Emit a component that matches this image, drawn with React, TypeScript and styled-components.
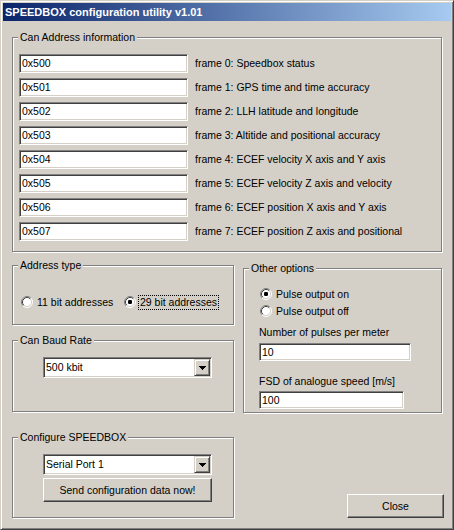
import React from "react";
import styled, { createGlobalStyle } from "styled-components";

const GlobalStyle = createGlobalStyle`
  html, body { margin: 0; padding: 0; background: #d4d0c8; }
  body { font-family: "Liberation Sans", Arial, sans-serif; }
`;

const Window = styled.div`
  box-sizing: border-box;
  width: 454px;
  height: 530px;
  background: #d4d0c8;
  border: 1px solid;
  border-color: #d4d0c8 #404040 #404040 #d4d0c8;
  box-shadow: inset 1px 1px 0 #fff, inset -1px -1px 0 #808080;
  padding: 2px;
  display: flex;
  flex-direction: column;
  font-family: "Liberation Sans", Arial, sans-serif;
  font-size: 10.5px;
  color: #000;
`;

const TitleBar = styled.div`
  height: 18px;
  flex: none;
  display: flex;
  align-items: center;
  padding-left: 2px;
  background: linear-gradient(to right, #0a246a, #a6caf0);
  color: #fff;
  font-weight: bold;
  font-size: 11px;
  white-space: nowrap;
`;

const Body = styled.div`
  padding: 16px 7px 0 9px;
  display: flex;
  flex-direction: column;
`;

const GroupBox = styled.div<{ $w: number; $pad: string; $mt?: number }>`
  position: relative;
  box-sizing: border-box;
  width: ${(p) => p.$w}px;
  margin-top: ${(p) => p.$mt ?? 0}px;
  padding: ${(p) => p.$pad};
  border: 1px solid #808080;
  box-shadow: 1px 1px 0 #fff, inset 1px 1px 0 #fff;
  display: flex;
  flex-direction: column;
`;

const Legend = styled.span`
  position: absolute;
  top: -7px;
  left: 5px;
  padding: 0 2px;
  line-height: 13px;
  background: #d4d0c8;
  white-space: nowrap;
`;

const AddressList = styled.div`
  display: flex;
  flex-direction: column;
  gap: 5px;
`;

const AddressRow = styled.div`
  display: flex;
  align-items: center;
  gap: 7px;
`;

const EditBox = styled.div<{ $w: number; $h: number }>`
  box-sizing: border-box;
  width: ${(p) => p.$w}px;
  height: ${(p) => p.$h}px;
  flex: none;
  background: #fff;
  border: 1px solid;
  border-color: #808080 #fff #fff #808080;
  box-shadow: inset 1px 1px 0 #404040, inset -1px -1px 0 #d4d0c8;
  padding: 0 2px;
  line-height: ${(p) => p.$h - 2}px;
  white-space: nowrap;
  overflow: hidden;
`;

const FrameLabel = styled.span`
  white-space: nowrap;
  line-height: 13px;
  margin-top: -1px;
`;

const Lower = styled.div`
  display: flex;
  gap: 9px;
  margin-top: 13px;
`;

const LeftCol = styled.div`
  width: 222px;
  display: flex;
  flex-direction: column;
`;

const RightCol = styled.div`
  width: 201px;
  margin-top: 3px;
  display: flex;
  flex-direction: column;
  align-items: flex-start;
`;

const RadioRowH = styled.div`
  display: flex;
  align-items: center;
`;

const RadioColumn = styled.div`
  display: flex;
  flex-direction: column;
  gap: 1px;
  margin-left: 1px;
`;

const RadioItem = styled.div<{ $w?: number }>`
  display: flex;
  align-items: center;
  gap: 2px;
  height: 16px;
  width: ${(p) => (p.$w ? `${p.$w}px` : "auto")};
`;

const RadioLabel = styled.span<{ $focus?: boolean }>`
  border: 1px dotted ${(p) => (p.$focus ? "#000" : "transparent")};
  padding: 0 1px;
  line-height: 13px;
  white-space: nowrap;
`;

const FieldLabel = styled.div<{ $mt: number }>`
  margin-top: ${(p) => p.$mt}px;
  line-height: 13px;
  height: 13px;
  white-space: nowrap;
`;

const FieldBox = styled(EditBox)<{ $mt: number }>`
  margin-top: ${(p) => p.$mt}px;
`;

const Combo = styled.div`
  box-sizing: border-box;
  width: 169px;
  height: 21px;
  display: flex;
  background: #fff;
  border: 1px solid;
  border-color: #808080 #fff #fff #808080;
  box-shadow: inset 1px 1px 0 #404040, inset -1px -1px 0 #d4d0c8;
  padding: 1px;
`;

const ComboText = styled.div`
  flex: 1;
  padding-left: 1px;
  line-height: 17px;
  white-space: nowrap;
`;

const DropButton = styled.div`
  box-sizing: border-box;
  width: 16px;
  height: 17px;
  display: flex;
  align-items: center;
  justify-content: center;
  background: #d4d0c8;
  border: 1px solid;
  border-color: #d4d0c8 #404040 #404040 #d4d0c8;
  box-shadow: inset 1px 1px 0 #fff, inset -1px -1px 0 #808080;
`;

const PushButton = styled.div<{ $w: number; $mt: number }>`
  box-sizing: border-box;
  width: ${(p) => p.$w}px;
  height: 24px;
  margin-top: ${(p) => p.$mt}px;
  display: flex;
  align-items: center;
  justify-content: center;
  background: #d4d0c8;
  border: 1px solid;
  border-color: #fff #404040 #404040 #fff;
  box-shadow: inset -1px -1px 0 #808080;
  white-space: nowrap;
`;

const CloseButton = styled(PushButton)`
  align-self: flex-end;
`;

const Radio: React.FC<{ checked?: boolean }> = ({ checked }) => (
  <svg width="12" height="12" viewBox="0 0 12 12" style={{ flex: "none" }}>
    <circle cx="6" cy="6" r="5" fill="#fff" />
    <path d="M2.11 9.89 A5.5 5.5 0 0 1 9.89 2.11" stroke="#808080" fill="none" />
    <path d="M9.89 2.11 A5.5 5.5 0 0 1 2.11 9.89" stroke="#fff" fill="none" />
    <path d="M2.82 9.18 A4.5 4.5 0 0 1 9.18 2.82" stroke="#404040" fill="none" />
    <path d="M9.18 2.82 A4.5 4.5 0 0 1 2.82 9.18" stroke="#d4d0c8" fill="none" />
    {checked && <rect x="4" y="4" width="4" height="4" rx="1.2" fill="#000" />}
  </svg>
);

const DownArrow: React.FC = () => (
  <svg width="7" height="4" viewBox="0 0 7 4" shapeRendering="crispEdges">
    <rect x="0" y="0" width="7" height="1" fill="#000" />
    <rect x="1" y="1" width="5" height="1" fill="#000" />
    <rect x="2" y="2" width="3" height="1" fill="#000" />
    <rect x="3" y="3" width="1" height="1" fill="#000" />
  </svg>
);

const frames = [
  ["0x500", "frame 0: Speedbox status"],
  ["0x501", "frame 1: GPS time and time accuracy"],
  ["0x502", "frame 2: LLH latitude and longitude"],
  ["0x503", "frame 3: Altitide and positional accuracy"],
  ["0x504", "frame 4: ECEF velocity X axis and Y axis"],
  ["0x505", "frame 5: ECEF velocity Z axis and velocity"],
  ["0x506", "frame 6: ECEF position X axis and Y axis"],
  ["0x507", "frame 7: ECEF position Z axis and positional"],
];

export default function App() {
  return (
    <>
      <GlobalStyle />
      <Window>
        <TitleBar>SPEEDBOX configuration utility v1.01</TitleBar>
        <Body>
          <GroupBox $w={430} $pad="16px 6px 10px 6px">
            <Legend>Can Address information</Legend>
            <AddressList>
              {frames.map(([addr, label]) => (
                <AddressRow key={addr}>
                  <EditBox $w={169} $h={19}>{addr}</EditBox>
                  <FrameLabel>{label}</FrameLabel>
                </AddressRow>
              ))}
            </AddressList>
          </GroupBox>
          <Lower>
            <LeftCol>
              <GroupBox $w={222} $pad="28px 8px 14px 8px">
                <Legend>Address type</Legend>
                <RadioRowH>
                  <RadioItem $w={103}>
                    <Radio />
                    <RadioLabel>11 bit addresses</RadioLabel>
                  </RadioItem>
                  <RadioItem>
                    <Radio checked />
                    <RadioLabel $focus>29 bit addresses</RadioLabel>
                  </RadioItem>
                </RadioRowH>
              </GroupBox>
              <GroupBox $w={222} $mt={15} $pad="16px 8px 33px 30px">
                <Legend>Can Baud Rate</Legend>
                <Combo>
                  <ComboText>500 kbit</ComboText>
                  <DropButton>
                    <DownArrow />
                  </DropButton>
                </Combo>
              </GroupBox>
              <GroupBox $w={222} $mt={25} $pad="16px 8px 15px 30px">
                <Legend>Configure SPEEDBOX</Legend>
                <Combo>
                  <ComboText>Serial Port 1</ComboText>
                  <DropButton>
                    <DownArrow />
                  </DropButton>
                </Combo>
                <PushButton $w={169} $mt={3}>
                  Send configuration data now!
                </PushButton>
              </GroupBox>
            </LeftCol>
            <RightCol>
              <GroupBox $w={199} $pad="17px 8px 3px 15px">
                <Legend>Other options</Legend>
                <RadioColumn>
                  <RadioItem>
                    <Radio checked />
                    <RadioLabel>Pulse output on</RadioLabel>
                  </RadioItem>
                  <RadioItem>
                    <Radio />
                    <RadioLabel>Pulse output off</RadioLabel>
                  </RadioItem>
                </RadioColumn>
                <FieldLabel $mt={7}>Number of pulses per meter</FieldLabel>
                <FieldBox $w={152} $h={18} $mt={4}>
                  10
                </FieldBox>
                <FieldLabel $mt={14}>FSD of analogue speed [m/s]</FieldLabel>
                <FieldBox $w={145} $h={18} $mt={3}>
                  100
                </FieldBox>
              </GroupBox>
              <CloseButton $w={97} $mt={81}>
                Close
              </CloseButton>
            </RightCol>
          </Lower>
        </Body>
      </Window>
    </>
  );
}
